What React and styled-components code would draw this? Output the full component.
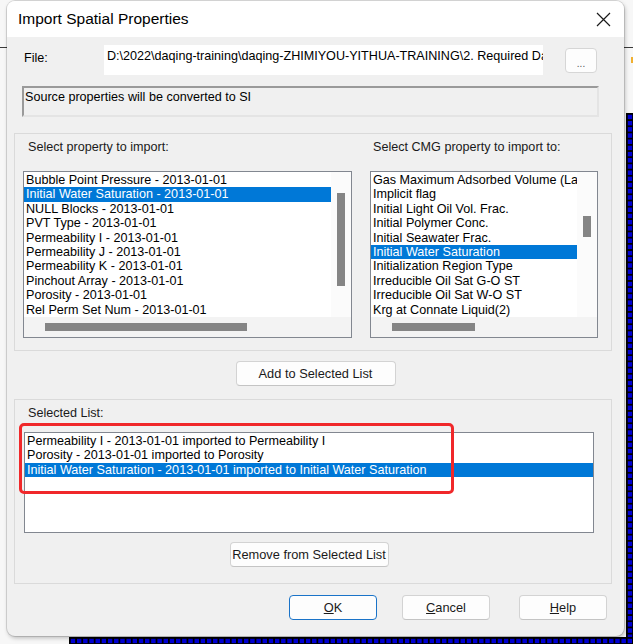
import styled, { createGlobalStyle } from 'styled-components';

const GlobalStyle = createGlobalStyle`
  html, body { margin: 0; padding: 0; }
  body {
    font-family: "Liberation Sans", Arial, sans-serif;
    background: #f6f6f6;
  }
`

const Desktop = styled.div`
  position: relative;
  width: 633px;
  height: 644px;
  overflow: hidden;
  background: #f7f7f7;
`

const BackLine = styled.div`
  position: absolute;
  left: 0;
  right: 0;
  top: 47px;
  height: 1px;
  background: #3a3a3a;
`

const OrangeMark = styled.div`
  position: absolute;
  left: 631px;
  top: 57px;
  width: 4px;
  height: 6px;
  background: #f0b030;
`

const BlueGrid = styled.div`
  position: absolute;
  left: ${p => p.$left}px;
  top: ${p => p.$top}px;
  right: 0;
  bottom: 0;
  background-color: #0000d6;
  background-image:
    linear-gradient(to right, #000 1.5px, transparent 1.5px),
    linear-gradient(to bottom, #000 1.5px, transparent 1.5px);
  background-size: 6.2px 6.2px;
`

const Dialog = styled.div`
  position: absolute;
  left: 7px;
  top: 1px;
  width: 617px;
  height: 635px;
  border-radius: 8px;
  background: #f0f0f0;
  box-shadow: 0 0 0 1px rgba(0, 0, 0, 0.12), 1px 2px 4px rgba(0, 0, 0, 0.25);
  display: flex;
  flex-direction: column;
  overflow: hidden;
`

const TitleBar = styled.div`
  height: 36px;
  flex: none;
  background: #ffffff;
  display: flex;
  align-items: center;
  justify-content: space-between;
  padding: 0 13px 0 11px;
  font-size: 15.5px;
  color: #000;
`

const Body = styled.div`
  display: flex;
  flex-direction: column;
  padding: 8px 7px 0;
  font-size: 12.6px;
  color: #000;
`

const FileRow = styled.div`
  display: flex;
  align-items: center;
  height: 30px;
  margin-left: 10px;
`

const FieldLabel = styled.div`
  width: 80px;
  margin-top: -5px;
`

const PathField = styled.div`
  width: 436px;
  height: 26px;
  background: #fff;
  padding: 4px 0 0 3px;
  overflow: hidden;
  white-space: nowrap;
  text-overflow: clip;
`

const SmallButton = styled.button`
  margin-left: 22px;
  width: 32px;
  height: 25px;
  padding: 6px 0 0;
  background: #fdfdfd;
  border: 1px solid #d6d6d6;
  border-radius: 4px;
  font-family: inherit;
  font-size: 10px;
  color: #555;
`

const InfoBox = styled.div`
  margin: 11px 0 0 8px;
  width: 572px;
  height: 25px;
  border: 2px solid;
  border-color: #9a9a9a #e4e4e4 #e4e4e4 #9a9a9a;
  padding: 2px 0 0 1px;
`

const Group = styled.div`
  position: relative;
  display: flex;
  flex-direction: column;
  margin-top: ${p => p.$gap}px;
  width: 598px;
  box-sizing: border-box;
  border: 1px solid #dadada;
  background: #f0f0f0;
  padding: ${p => p.$pad};
`

const Columns = styled.div`
  display: grid;
  grid-template-columns: 329px 228px;
  column-gap: 18px;
`

const Column = styled.div`
  display: flex;
  flex-direction: column;
`

const Caption = styled.div`
  height: 15px;
  line-height: 15px;
  padding-left: ${p => p.$indent}px;
  margin-bottom: ${p => p.$gap}px;
  color: #1a1a1a;
`

const ListBox = styled.div`
  display: grid;
  grid-template-columns: 1fr ${p => (p.$scroll ? '20px' : '0')};
  grid-template-rows: ${p => (p.$scroll ? '145px 20px' : '1fr')};
  height: ${p => p.$height}px;
  box-sizing: border-box;
  border: 1px solid #828790;
  background: #fff;
  overflow: hidden;
`

const Items = styled.div`
  padding-top: 1px;
  overflow: hidden;
  min-width: 0;
`

const Item = styled.div`
  height: 14.4px;
  line-height: 14.4px;
  padding-left: 2px;
  white-space: nowrap;
  overflow: hidden;
  background: ${p => (p.$selected ? '#0078d7' : 'transparent')};
  color: ${p => (p.$selected ? '#fff' : '#000')};
`

const VTrack = styled.div`
  position: relative;
  background: #fbfbfb;
`

const HTrack = styled.div`
  position: relative;
  background: #f3f3f3;
`

const Corner = styled.div`
  background: #f3f3f3;
`

const Thumb = styled.div`
  position: absolute;
  background: #858585;
`

const PushButton = styled.button`
  flex: none;
  width: ${p => p.$width}px;
  height: 25px;
  margin: ${p => p.$margin || '0'};
  padding: 0;
  background: #fdfdfd;
  border: 1px solid ${p => (p.$default ? '#1a73c8' : '#d3d3d3')};
  border-bottom-color: ${p => (p.$default ? '#1a73c8' : '#c4c4c4')};
  border-radius: 4px;
  font-family: "Liberation Sans", Arial, sans-serif;
  font-size: 12.8px;
  color: #1a1a1a;
`

const Marker = styled.div`
  position: absolute;
  left: 4px;
  top: 23px;
  width: 435px;
  height: 71px;
  box-sizing: border-box;
  border: 3px solid #f0282a;
  border-radius: 5px;
  pointer-events: none;
`

const Footer = styled.div`
  display: flex;
  justify-content: flex-end;
  gap: 25px;
  margin-top: 11px;
  padding-right: 10px;
`

const sourceProps = [
  'Bubble Point Pressure - 2013-01-01',
  'Initial Water Saturation - 2013-01-01',
  'NULL Blocks - 2013-01-01',
  'PVT Type - 2013-01-01',
  'Permeability I - 2013-01-01',
  'Permeability J - 2013-01-01',
  'Permeability K - 2013-01-01',
  'Pinchout Array - 2013-01-01',
  'Porosity - 2013-01-01',
  'Rel Perm Set Num - 2013-01-01',
]

const cmgProps = [
  'Gas Maximum Adsorbed Volume (Langmuir)',
  'Implicit flag',
  'Initial Light Oil Vol. Frac.',
  'Initial Polymer Conc.',
  'Initial Seawater Frac.',
  'Initial Water Saturation',
  'Initialization Region Type',
  'Irreducible Oil Sat G-O ST',
  'Irreducible Oil Sat W-O ST',
  'Krg at Connate Liquid(2)',
]

const selectedProps = [
  'Permeability I - 2013-01-01 imported to Permeability I',
  'Porosity - 2013-01-01 imported to Porosity',
  'Initial Water Saturation - 2013-01-01 imported to Initial Water Saturation',
]

const ScrollList = ({ items, selected, vThumb, hThumb }) => (
  <ListBox $scroll $height={167}>
    <Items>
      {items.map((t, i) => (
        <Item key={t} $selected={i === selected}>{t}</Item>
      ))}
    </Items>
    <VTrack>
      <Thumb style={{ left: 6, width: 8, top: vThumb[0], height: vThumb[1] }} />
    </VTrack>
    <HTrack>
      <Thumb style={{ top: 6, height: 8, left: hThumb[0], width: hThumb[1] }} />
    </HTrack>
    <Corner />
  </ListBox>
)

const CloseIcon = () => (
  <svg width="15" height="15" viewBox="0 0 15 15">
    <path d="M1 1 L14 14 M14 1 L1 14" stroke="#1a1a1a" strokeWidth="1.2" fill="none" />
  </svg>
)

export default function App() {
  return (
    <Desktop>
      <GlobalStyle />
      <BackLine />
      <OrangeMark />
      <BlueGrid $left={626} $top={113} />
      <BlueGrid $left={69} $top={637} />
      <Dialog>
        <TitleBar>
          <span>Import Spatial Properties</span>
          <CloseIcon />
        </TitleBar>
        <Body>
          <FileRow>
            <FieldLabel>File:</FieldLabel>
            <PathField>D:\2022\daqing-training\daqing-ZHIMIYOU-YITHUA-TRAINING\2. Required Data</PathField>
            <SmallButton>...</SmallButton>
          </FileRow>
          <InfoBox>Source properties will be converted to SI</InfoBox>

          <Group $gap={16} $pad="6px 12px 12px 8px">
            <Columns>
              <Column>
                <Caption $indent={5} $gap={16}>Select property to import:</Caption>
                <ScrollList items={sourceProps} selected={1} vThumb={[21, 93]} hThumb={[21, 202]} />
              </Column>
              <Column>
                <Caption $indent={3} $gap={16}>Select CMG property to import to:</Caption>
                <ScrollList items={cmgProps} selected={5} vThumb={[44, 21]} hThumb={[21, 83]} />
              </Column>
            </Columns>
          </Group>

          <PushButton $width={160} $margin="10px auto 0">Add to Selected List</PushButton>

          <Group $gap={13} $pad="6px 17px 16px 9px">
            <Caption $indent={4} $gap={11}>Selected List:</Caption>
            <ListBox $height={101}>
              <Items>
                {selectedProps.map((t, i) => (
                  <Item key={t} $selected={i === 2}>{t}</Item>
                ))}
              </Items>
            </ListBox>
            <Marker />
            <PushButton $width={159} $margin="9px auto 0">Remove from Selected List</PushButton>
          </Group>

          <Footer>
            <PushButton $width={88} $default><u>O</u>K</PushButton>
            <PushButton $width={88}><u>C</u>ancel</PushButton>
            <PushButton $width={88} $margin="0 0 0 4px"><u>H</u>elp</PushButton>
          </Footer>
        </Body>
      </Dialog>
    </Desktop>
  )
}
